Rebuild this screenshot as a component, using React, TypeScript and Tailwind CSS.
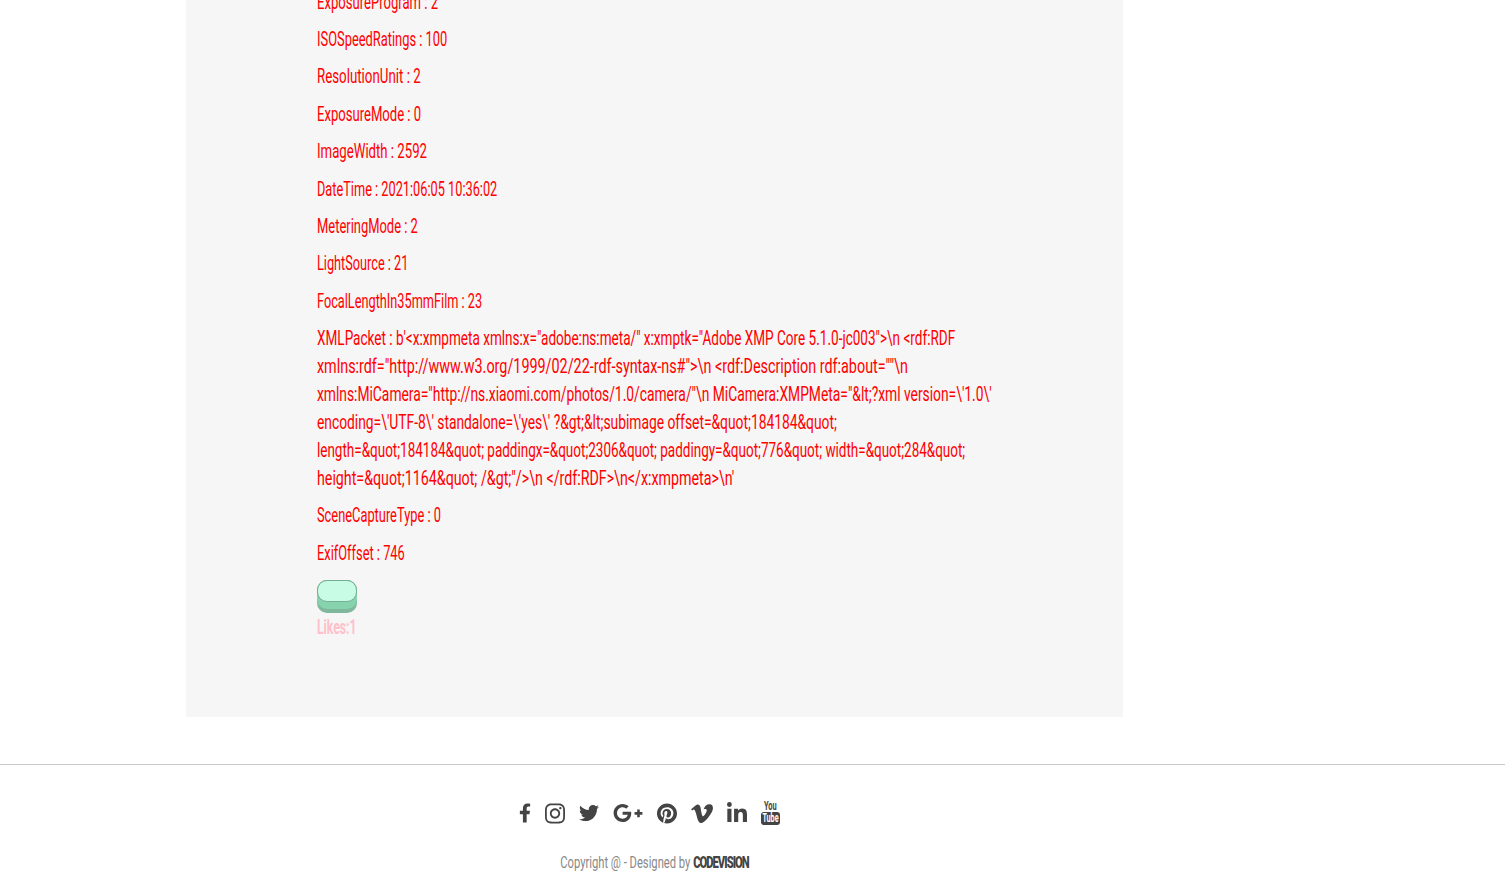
import React from 'react';
import { FaFacebookF, FaInstagram, FaTwitter, FaGooglePlusG, FaPinterest, FaVimeoV, FaLinkedinIn } from 'react-icons/fa';

const exifRows = [
  { text: 'ExposureProgram : 2', fit: 'scale-x-[0.654]' },
  { text: 'ISOSpeedRatings : 100', fit: 'scale-x-[0.644]' },
  { text: 'ResolutionUnit : 2', fit: 'scale-x-[0.665]' },
  { text: 'ExposureMode : 0', fit: 'scale-x-[0.654]' },
  { text: 'ImageWidth : 2592', fit: 'scale-x-[0.659]' },
  { text: 'DateTime : 2021:06:05 10:36:02', fit: 'scale-x-[0.638]' },
  { text: 'MeteringMode : 2', fit: 'scale-x-[0.647]' },
  { text: 'LightSource : 21', fit: 'scale-x-[0.636]' },
  { text: 'FocalLengthIn35mmFilm : 23', fit: 'scale-x-[0.637]' },
];

const xmlLines = [
  { text: `XMLPacket : b'<x:xmpmeta xmlns:x="adobe:ns:meta/" x:xmptk="Adobe XMP Core 5.1.0-jc003">\\n <rdf:RDF`, fit: 'scale-x-[0.678]' },
  { text: `xmlns:rdf="http://www.w3.org/1999/02/22-rdf-syntax-ns#">\\n <rdf:Description rdf:about=""\\n`, fit: 'scale-x-[0.718]' },
  { text: `xmlns:MiCamera="http://ns.xiaomi.com/photos/1.0/camera/"\\n MiCamera:XMPMeta="&lt;?xml version=\\'1.0\\'`, fit: 'scale-x-[0.691]' },
  { text: `encoding=\\'UTF-8\\' standalone=\\'yes\\' ?&gt;&lt;subimage offset=&quot;184184&quot;`, fit: 'scale-x-[0.691]' },
  { text: `length=&quot;184184&quot; paddingx=&quot;2306&quot; paddingy=&quot;776&quot; width=&quot;284&quot;`, fit: 'scale-x-[0.674]' },
  { text: `height=&quot;1164&quot; /&gt;"/>\\n </rdf:RDF>\\n</x:xmpmeta>\\n'`, fit: 'scale-x-[0.712]' },
];

const YoutubeWordmark: React.FC = () => (
  <div className="flex w-[19px] flex-col items-center">
    <span className="h-[10px] origin-center scale-x-[0.62] whitespace-nowrap text-[12px] leading-[10px] font-bold text-[#444]">You</span>
    <span className="mt-[1px] flex h-[13px] w-[19px] items-center justify-center rounded-[3px] bg-[#444]">
      <span className="origin-center scale-x-[0.6] whitespace-nowrap text-[12px] leading-[13px] font-bold text-white">Tube</span>
    </span>
  </div>
);

const App: React.FC = () => {
  return (
    <div className="h-[883px] overflow-hidden bg-white font-['Roboto',sans-serif]">
      <main className="ml-[186px] -mt-[12.3px] h-[729.3px] w-[937px] bg-[#f6f6f6] pl-[131px] text-[20px] leading-7 text-[#ff0000]">
        {exifRows.map((row) => (
          <p key={row.text} className="mb-[9.375px] whitespace-nowrap">
            <span className={`inline-block origin-left ${row.fit}`}>{row.text}</span>
          </p>
        ))}
        <p className="mb-[9.375px] whitespace-nowrap">
          {xmlLines.map((line) => (
            <span key={line.text} className={`block origin-left ${line.fit}`}>{line.text}</span>
          ))}
        </p>
        <p className="mb-[9.375px] whitespace-nowrap">
          <span className="inline-block origin-left scale-x-[0.642]">SceneCaptureType : 0</span>
        </p>
        <p className="mb-[13.3px] whitespace-nowrap">
          <span className="inline-block origin-left scale-x-[0.642]">ExifOffset : 746</span>
        </p>
        <button className="relative block h-[33px] w-[40px] rounded-[10px] bg-[#7fb89d] p-0">
          <span className="absolute inset-x-0 top-0 h-[29px] rounded-[10px] bg-[#86d3ae]"></span>
          <span className="absolute inset-x-0 top-0 h-[22px] rounded-[10px] border border-[#74ae95] bg-[#c9fce4]"></span>
        </button>
        <p className="font-bold leading-7 text-[#ffc0cb]">
          <span className="inline-block origin-left scale-x-[0.61]">Likes:1</span>
        </p>
      </main>
      <footer className="mt-[47px] border-t border-[#c8c8c8]">
        <div className="ml-[186px] w-[937px]">
          <div className="mt-[36px] flex h-[24px] items-center justify-center gap-[14px] pr-[10px] text-[#444]">
            <FaFacebookF className="h-[20px] w-[12px]" />
            <FaInstagram className="h-[23px] w-[20px]" />
            <FaTwitter className="h-[20px] w-[20px]" />
            <FaGooglePlusG className="h-[24px] w-[30px]" />
            <FaPinterest className="h-[21px] w-[20px]" />
            <FaVimeoV className="h-[25px] w-[22px]" />
            <FaLinkedinIn className="h-[23px] w-[20px]" />
            <YoutubeWordmark />
          </div>
          <p className="mt-[26px] origin-center scale-x-[0.7] text-center text-[16px] leading-6 whitespace-nowrap text-[#888]">
            Copyright @ - Designed by <b className="font-black tracking-[-1.4px] text-[#444]">CODEVISION</b>
          </p>
        </div>
      </footer>
    </div>
  );
};

export default App;
